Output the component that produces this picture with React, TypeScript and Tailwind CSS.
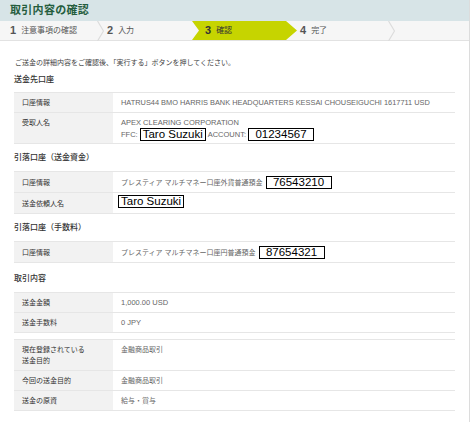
const font = { fontFamily: '"Liberation Sans", "Noto Sans CJK JP", sans-serif' };

type Row = { label: React.ReactNode; value: React.ReactNode; tall?: boolean };

const Masked = ({ children }: { children: React.ReactNode }) => (
  <span className="inline-block w-[66px] h-[13px] border border-black bg-white text-black text-[11.5px] leading-[11px] px-[2px] whitespace-nowrap overflow-hidden">
    {children}
  </span>
);

// rowH: height of a plain row (without its bottom border)
const Table = ({ rows, className = '', rowH = 'h-[19px]' }: { rows: Row[]; className?: string; rowH?: string }) => (
  <div className={`mx-[14px] border-t border-[#e6e6e6] ${className}`}>
    {rows.map((r, i) => (
      <div key={i} className="flex border-b border-[#e6e6e6]">
        <div
          className={`w-[99px] shrink-0 bg-[#f2f2f2] pl-[8px] text-[7px] leading-[11px] text-[#333] ${
            r.tall ? 'pt-[4px]' : `${rowH} flex items-center`
          }`}
        >
          <div>{r.label}</div>
        </div>
        <div
          className={`flex-1 pl-[8px] text-[7.5px] leading-[11px] text-[#666] ${
            r.tall ? 'h-[30px] pt-[4px]' : `${rowH} flex items-center`
          }`}
        >
          {r.value}
        </div>
      </div>
    ))}
  </div>
);

const Heading = ({ children, className = '' }: { children: React.ReactNode; className?: string }) => (
  <div className={`px-[14px] text-[8px] leading-[12px] text-[#333] font-medium ${className}`}>{children}</div>
);

const Chevron = () => (
  <svg width="7" height="20" viewBox="0 0 7 20" className="shrink-0">
    <polyline points="0.5,0 6.5,10 0.5,20" fill="none" stroke="#dcdcdc" strokeWidth="1.2" />
  </svg>
);

const Step = ({ n, label }: { n: string; label: string }) => (
  <>
    <span className="text-[11px] font-bold leading-none">{n}</span>
    <span className="text-[8px] leading-none">{label}</span>
  </>
);

export default function App() {
  return (
    <div className="w-[474px] h-[422px] overflow-hidden bg-white" style={font}>
      <div className="w-[470px] min-h-[422px] border-r border-[#dcdcdc]">
        <div className="h-[21px] bg-[#d7e4e7] pl-[10px] flex items-center">
          <h1 className="text-[11px] font-bold text-[#255d3e] leading-none tracking-[0.3px]">取引内容の確認</h1>
        </div>

        <div className="h-[20px] bg-[#f6f6f6] border-b border-[#e2e2e2] flex items-center text-[#555]">
          <div className="w-[97px] pl-[10px] flex items-center gap-[5px]">
            <Step n="1" label="注意事項の確認" />
          </div>
          <Chevron />
          <div className="w-[88px] pl-[3px] flex items-center gap-[5px]">
            <Step n="2" label="入力" />
          </div>
          <div className="w-[105px] h-full bg-[#c6d400] text-[#333] flex items-center gap-[5px] pl-[13px] [clip-path:polygon(0_0,calc(100%-11px)_0,100%_50%,calc(100%-11px)_100%,0_100%,7px_50%)]">
            <Step n="3" label="確認" />
          </div>
          <div className="w-[91px] pl-[3px] flex items-center gap-[5px]">
            <Step n="4" label="完了" />
          </div>
          <Chevron />
        </div>

        <p className="pl-[15px] pt-[16px] text-[7px] leading-[12px] text-[#444]">
          ご送金の詳細内容をご確認後、「実行する」ボタンを押してください。
        </p>

        <Heading className="mt-[5px]">送金先口座</Heading>
        <Table
          className="mt-[6px]"
          rows={[
            {
              label: '口座情報',
              value: (
                <span className="text-[7.4px] whitespace-nowrap">
                  HATRUS44 BMO HARRIS BANK HEADQUARTERS KESSAI CHOUSEIGUCHI 1617711 USD
                </span>
              ),
            },
            {
              label: '受取人名',
              tall: true,
              value: (
                <div>
                  <div>APEX CLEARING CORPORATION</div>
                  <div className="flex items-center gap-[2px] h-[13px]">
                    FFC:<Masked>Taro Suzuki</Masked>ACCOUNT:
                    <Masked>
                      <span className="block text-center">01234567</span>
                    </Masked>
                  </div>
                </div>
              ),
            },
          ]}
        />

        <Heading className="mt-[8px]">引落口座（送金資金）</Heading>
        <Table
          className="mt-[7px]"
          rowH="h-[20px]"
          rows={[
            {
              label: '口座情報',
              value: (
                <span className="flex items-center gap-[3px] text-[7px]">
                  プレスティア マルチマネー口座外貨普通預金
                  <Masked>
                    <span className="block text-center">76543210</span>
                  </Masked>
                </span>
              ),
            },
            {
              label: '送金依頼人名',
              value: (
                <span className="-ml-[3px]">
                  <Masked>Taro Suzuki</Masked>
                </span>
              ),
            },
          ]}
        />

        <Heading className="mt-[8px]">引落口座（手数料）</Heading>
        <Table
          className="mt-[7px]"
          rowH="h-[20px]"
          rows={[
            {
              label: '口座情報',
              value: (
                <span className="flex items-center gap-[3px] text-[7px]">
                  プレスティア マルチマネー口座円普通預金
                  <Masked>
                    <span className="block text-center">87654321</span>
                  </Masked>
                </span>
              ),
            },
          ]}
        />

        <Heading className="mt-[10px]">取引内容</Heading>
        <Table
          className="mt-[7px]"
          rows={[
            { label: '送金金額', value: '1,000.00 USD' },
            { label: '送金手数料', value: '0 JPY' },
          ]}
        />
        <Table
          className="mt-[6px]"
          rows={[
            {
              label: (
                <>
                  現在登録されている
                  <br />
                  送金目的
                </>
              ),
              tall: true,
              value: <div className="text-[7px]">金融商品取引</div>,
            },
            { label: '今回の送金目的', value: <span className="text-[7px]">金融商品取引</span> },
            { label: '送金の原資', value: <span className="text-[7px]">給与・賞与</span> },
          ]}
        />
      </div>
    </div>
  );
}
